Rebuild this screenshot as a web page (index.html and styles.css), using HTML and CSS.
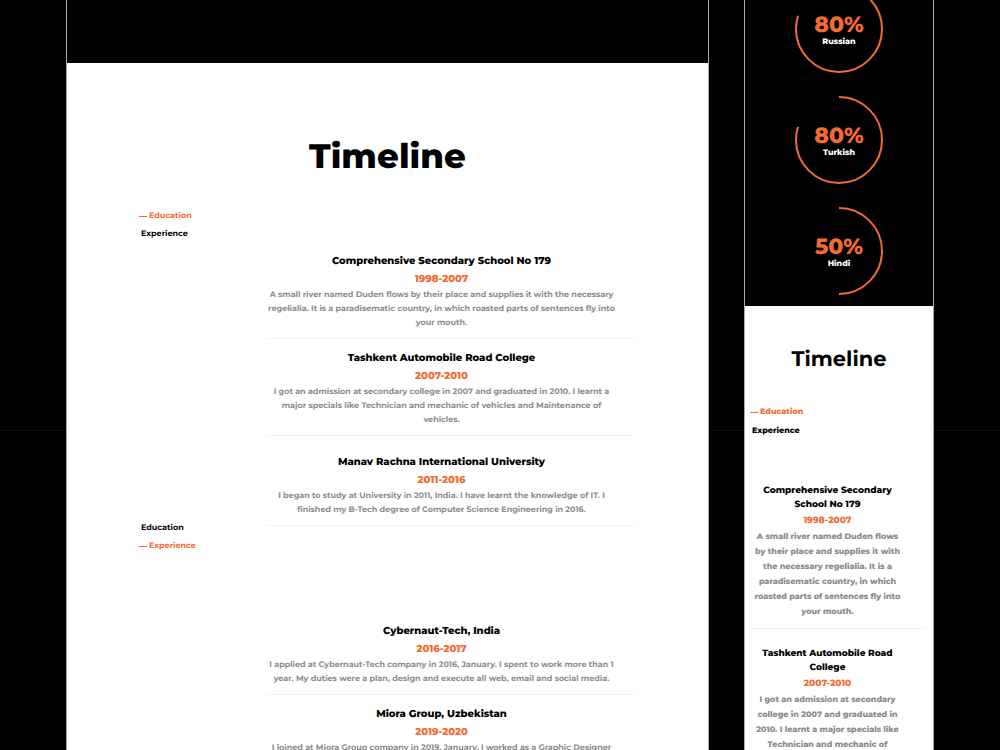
FILE: index.html
```html
<!DOCTYPE html>
<html lang="en">
<head>
    <meta charset="UTF-8">
    <meta name="viewport" content="width=device-width, initial-scale=1.0">
    <title>Timeline</title>
    <link rel="stylesheet" href="styles.css">
</head>
<body>
    <div class="showcase">
        <main class="screen desktop">
            <div class="dark-top"></div>
            <h1>Timeline</h1>

            <section class="block" id="education">
                <nav class="tabs">
                    <a href="#education" class="active">Education</a>
                    <a href="#experience">Experience</a>
                </nav>
                <div class="list">
                    <article class="entry">
                        <h2>Comprehensive Secondary School No 179</h2>
                        <h3>1998-2007</h3>
                        <p>A small river named Duden flows by their place and supplies it with the necessary regelialia. It is a paradisematic country, in which roasted parts of sentences fly into your mouth.</p>
                    </article>
                    <article class="entry">
                        <h2>Tashkent Automobile Road College</h2>
                        <h3>2007-2010</h3>
                        <p>I got an admission at secondary college in 2007 and graduated in 2010. I learnt a major specials like Technician and mechanic of vehicles and Maintenance of vehicles.</p>
                    </article>
                    <article class="entry spaced">
                        <h2>Manav Rachna International University</h2>
                        <h3>2011-2016</h3>
                        <p>I began to study at University in 2011, India. I have learnt the knowledge of IT. I finished my B-Tech degree of Computer Science Engineering in 2016.</p>
                    </article>
                </div>
            </section>

            <section class="block experience" id="experience">
                <nav class="tabs">
                    <a href="#education">Education</a>
                    <a href="#experience" class="active">Experience</a>
                </nav>
                <div class="list">
                    <article class="entry">
                        <h2>Cybernaut-Tech, India</h2>
                        <h3>2016-2017</h3>
                        <p>I applied at Cybernaut-Tech company in 2016, January. I spent to work more than 1 year. My duties were a plan, design and execute all web, email and social media.</p>
                    </article>
                    <article class="entry">
                        <h2>Miora Group, Uzbekistan</h2>
                        <h3>2019-2020</h3>
                        <p>I joined at Miora Group company in 2019, January. I worked as a Graphic Designer</p>
                    </article>
                </div>
            </section>
        </main>

        <aside class="screen mobile">
            <div class="languages">
                <div class="ring">
                    <svg viewBox="0 0 88 88"><circle cx="44" cy="44" r="43" pathLength="100" stroke-dasharray="80 100"/></svg>
                    <div class="ring-text"><strong>80%</strong><span>Russian</span></div>
                </div>
                <div class="ring">
                    <svg viewBox="0 0 88 88"><circle cx="44" cy="44" r="43" pathLength="100" stroke-dasharray="80 100"/></svg>
                    <div class="ring-text"><strong>80%</strong><span>Turkish</span></div>
                </div>
                <div class="ring">
                    <svg viewBox="0 0 88 88"><circle cx="44" cy="44" r="43" pathLength="100" stroke-dasharray="50 100"/></svg>
                    <div class="ring-text"><strong>50%</strong><span>Hindi</span></div>
                </div>
            </div>
            <h1>Timeline</h1>

            <section class="block" id="m-education">
                <nav class="tabs">
                    <a href="#m-education" class="active">Education</a>
                    <a href="#experience">Experience</a>
                </nav>
                <div class="list">
                    <article class="entry">
                        <h2>Comprehensive Secondary School No 179</h2>
                        <h3>1998-2007</h3>
                        <p>A small river named Duden flows by their place and supplies it with the necessary regelialia. It is a paradisematic country, in which roasted parts of sentences fly into your mouth.</p>
                    </article>
                    <article class="entry">
                        <h2>Tashkent Automobile Road College</h2>
                        <h3>2007-2010</h3>
                        <p>I got an admission at secondary college in 2007 and graduated in 2010. I learnt a major specials like Technician and mechanic of</p>
                    </article>
                </div>
            </section>
        </aside>
    </div>
</body>
</html>
```
FILE: styles.css
```css
*{
    box-sizing: border-box;
    margin: 0;
    padding: 0;
}

body{
    background: linear-gradient(#0c0c0c, #0c0c0c) 0 430px / 100% 1px no-repeat #000;
    font-family: Montserrat, Inter, sans-serif;
    font-weight: 700;
    text-rendering: geometricPrecision;
    color: #000;
}

.showcase{
    display: grid;
    grid-template-columns: 643fr 190fr;
    gap: 35px;
    height: 100vh;
    padding: 0 66px;
    overflow: hidden;
}

.screen{
    background: #fff;
    border: solid #aaa;
    border-width: 0 1px;
    overflow: hidden;
}

h2, h3{
    font-weight: 800;
}

h1, h2, h3, p{
    text-align: center;
}

h3, .active{
    color: #f26b32;
}

p{
    color: #8c8c8c;
}

.tabs{
    display: flex;
    flex-direction: column;
    align-items: flex-start;
}

.tabs a{
    padding-left: 2px;
    color: #000;
    text-decoration: none;
}

.tabs .active{
    display: flex;
    align-items: center;
    gap: 2px;
    padding-left: 0;
    color: #f26b32;
}

.active::before{
    content: "";
    width: 8px;
    height: 1px;
    background: #f26b32;
}

.entry{
    border-bottom: 1px solid #f2f2f2;
}

/* desktop */
.dark-top{
    height: 63px;
    background: #000;
}

.desktop h1{
    padding: 70px 0 27px;
    font-size: 34px;
    font-weight: 800;
    line-height: 47px;
}

.desktop .block{
    display: grid;
    grid-template-columns: 128fr 369fr;
    padding: 0 72px;
}

.desktop .tabs{
    font-size: 8px;
    line-height: 18px;
}

.desktop .list{
    padding-top: 45px;
}

.desktop .experience{
    margin-top: -7px;
}

.desktop .experience .list{
    padding-top: 103px;
}

.desktop .entry{
    padding: 0 20px 8px 0;
    margin-bottom: 10px;
}

.desktop .entry.spaced{
    padding-top: 7px;
    margin-bottom: 0;
}

.desktop h2,
.desktop h3{
    font-size: 10px;
    line-height: 18px;
}

.desktop p{
    font-size: 8px;
    line-height: 14px;
}

/* mobile */
.languages{
    display: flex;
    flex-direction: column;
    align-items: center;
    gap: 23px;
    margin-top: -15px;
    padding-bottom: 11px;
    background: #000;
}

.ring{
    display: grid;
    width: 88px;
}

.ring svg,
.ring-text{
    grid-area: 1 / 1;
}

.ring svg{
    display: block;
    width: 100%;
    fill: none;
    stroke: #f26b32;
    stroke-width: 2;
    transform: rotate(-90deg);
}

.ring-text{
    display: flex;
    flex-direction: column;
    align-items: center;
    justify-content: center;
    padding-top: 3px;
    color: #fff;
    font-size: 8px;
    font-weight: 800;
    line-height: 12px;
}

.ring-text strong{
    color: #f26b32;
    font-size: 22px;
    font-weight: 800;
    line-height: 23px;
}

.mobile h1{
    padding: 41px 0 30px;
    font-size: 21px;
    font-weight: 700;
    line-height: 26px;
}

.mobile .tabs{
    padding-left: 5px;
    font-size: 8px;
    font-weight: 800;
    line-height: 19px;
}

.mobile .list{
    padding: 43px 6px 0 7px;
}

.mobile .entry{
    padding: 0 24px 8px 0;
    margin-bottom: 18px;
}

.mobile h2{
    font-size: 9px;
    line-height: 14px;
}

.mobile h3{
    font-size: 9px;
    line-height: 18px;
}

.mobile p{
    font-size: 8px;
    font-weight: 800;
    line-height: 15px;
}
```
